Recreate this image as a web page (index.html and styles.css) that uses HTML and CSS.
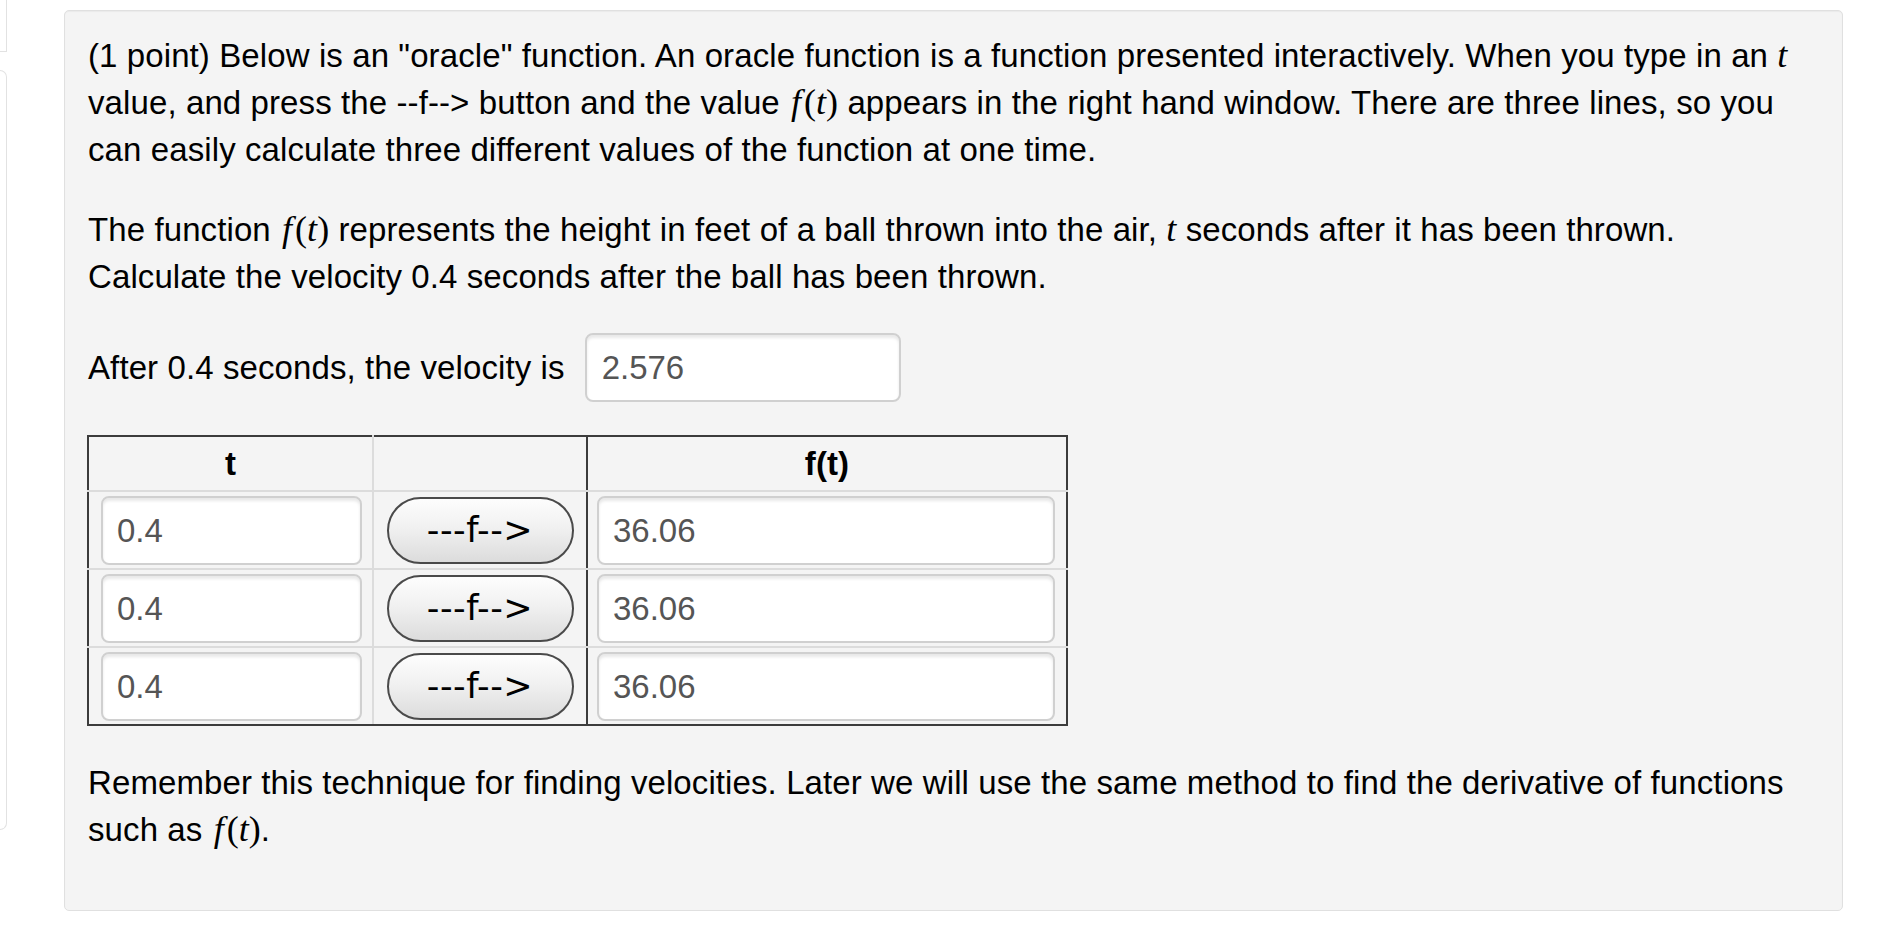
FILE: index.html
```html
<!DOCTYPE html>
<html lang="en">
<head>
<meta charset="utf-8">
<title>Oracle function</title>
<link rel="stylesheet" href="styles.css">
</head>
<body>
<div class="page">
  <aside class="side">
    <div class="side-top"></div>
    <div class="side-main"></div>
  </aside>
  <main class="well">
    <p class="para">(1 point) Below is an "oracle" function. An oracle function is a function presented interactively. When you type in an <span class="m"><i>t</i></span> value, and press the --f--&gt; button and the value <span class="m"><i class="fi">f</i>(<i>t</i>)</span> appears in the right hand window. There are three lines, so you can easily calculate three different values of the function at one time.</p>
    <p class="para">The function <span class="m"><i class="fi">f</i>(<i>t</i>)</span> represents the height in feet of a ball thrown into the air, <span class="m"><i>t</i></span> seconds after it has been thrown.<br>Calculate the velocity 0.4 seconds after the ball has been thrown.</p>
    <p class="para answer-line">After 0.4 seconds, the velocity is <input class="field answer" type="text" value="2.576"></p>
    <table class="oracle">
      <colgroup>
        <col class="col-t">
        <col class="col-btn">
        <col class="col-f">
      </colgroup>
      <thead>
        <tr>
          <th class="c1">t</th>
          <th class="c2"></th>
          <th class="c3">f(t)</th>
        </tr>
      </thead>
      <tbody>
        <tr>
          <td class="c1"><input class="field" type="text" value="0.4"></td>
          <td class="c2"><button class="fbtn" type="button">---f--&gt;</button></td>
          <td class="c3"><input class="field" type="text" value="36.06"></td>
        </tr>
        <tr>
          <td class="c1"><input class="field" type="text" value="0.4"></td>
          <td class="c2"><button class="fbtn" type="button">---f--&gt;</button></td>
          <td class="c3"><input class="field" type="text" value="36.06"></td>
        </tr>
        <tr class="last-row">
          <td class="c1"><input class="field" type="text" value="0.4"></td>
          <td class="c2"><button class="fbtn" type="button">---f--&gt;</button></td>
          <td class="c3"><input class="field" type="text" value="36.06"></td>
        </tr>
      </tbody>
    </table>
    <p class="para">Remember this technique for finding velocities. Later we will use the same method to find the derivative of functions such as <span class="m"><i class="fi">f</i>(<i>t</i>)</span>.</p>
  </main>
</div>
</body>
</html>
```
FILE: styles.css
```css
html, body {
  margin: 0;
  padding: 0;
  background: #ffffff;
}

body {
  font-family: "Liberation Sans", Arial, Helvetica, sans-serif;
  font-size: 33px;
  line-height: 47px;
  letter-spacing: 0.1px;
  color: #000;
}

.page {
  display: flex;
  align-items: flex-start;
  width: 1897px;
}

.side {
  flex: 0 0 7px;
  display: flex;
  flex-direction: column;
}

.side-top {
  height: 51px;
  border-right: 1px solid #e2e2e2;
  border-bottom: 1px solid #e2e2e2;
  background: #fff;
}

.side-main {
  margin-top: 18px;
  height: 758px;
  border: 1px solid #e2e2e2;
  border-left: none;
  border-radius: 0 9px 9px 0;
  background: #fff;
}

.well {
  flex: 0 0 auto;
  box-sizing: border-box;
  width: 1779px;
  margin: 10px 0 0 57px;
  padding: 21px 42px 24px 23px;
  background: #f4f4f4;
  border: 1px solid #e0e0e0;
  border-radius: 5px;
  box-shadow: inset 0 1px 1px rgba(0, 0, 0, 0.04);
}

.para {
  margin: 0 0 33px;
}

.m {
  font-family: "Liberation Serif", "Times New Roman", serif;
  font-size: 36px;
  line-height: 1;
  letter-spacing: 0;
}

.m i {
  font-style: italic;
}

.m .fi {
  margin-left: 2px;
  margin-right: 3px;
}

.answer-line {
  display: flex;
  align-items: center;
  gap: 20px;
}

.field {
  box-sizing: border-box;
  display: block;
  width: 100%;
  height: 69px;
  margin: 0;
  padding: 0 14px;
  border: 2px solid #d0d0d0;
  border-radius: 8px;
  background: #fff;
  box-shadow: inset 0 3px 3px rgba(0, 0, 0, 0.09);
  font-family: "Liberation Sans", Arial, Helvetica, sans-serif;
  font-size: 33px;
  color: #555;
  outline: none;
}

.field.answer {
  width: 316px;
  padding-left: 15px;
}

.oracle {
  table-layout: fixed;
  width: 979px;
  border-collapse: collapse;
  margin: 0 0 33px -1px;
}

.col-t { width: 285px; }
.col-btn { width: 214px; }
.col-f { width: 480px; }

.oracle th,
.oracle td {
  border: 2px solid #dcdcdc;
}

.oracle th {
  height: 45px;
  padding: 4px 0;
  font-weight: bold;
  font-size: 33px;
  line-height: 45px;
  text-align: center;
  border-top-color: #3c3c3c;
}

.oracle td {
  padding: 4px 10px 3px 12px;
  vertical-align: middle;
}

.oracle td.c2 {
  padding: 4px 12px 3px 12px;
  text-align: center;
}

.oracle .c1 {
  border-left-color: #3c3c3c;
}

.oracle .c2 {
  border-right-color: #3c3c3c;
}

.oracle .c3 {
  border-left-color: #3c3c3c;
  border-right-color: #3c3c3c;
}

.oracle .last-row td {
  border-bottom-color: #3c3c3c;
}

.oracle td.c3 {
  padding-left: 9px;
  padding-right: 11px;
}

.fbtn {
  box-sizing: border-box;
  display: block;
  width: 187px;
  height: 67px;
  margin: 0 auto;
  padding: 0;
  border: 2px solid #4a4a4a;
  border-radius: 34px;
  background: linear-gradient(to bottom, #fdfdfd 0%, #f1f1f1 45%, #dcdcdc 100%);
  font-family: "DejaVu Sans", "Liberation Sans", sans-serif;
  font-size: 35px;
  letter-spacing: 0.5px;
  color: #000;
  line-height: 1;
}
```
